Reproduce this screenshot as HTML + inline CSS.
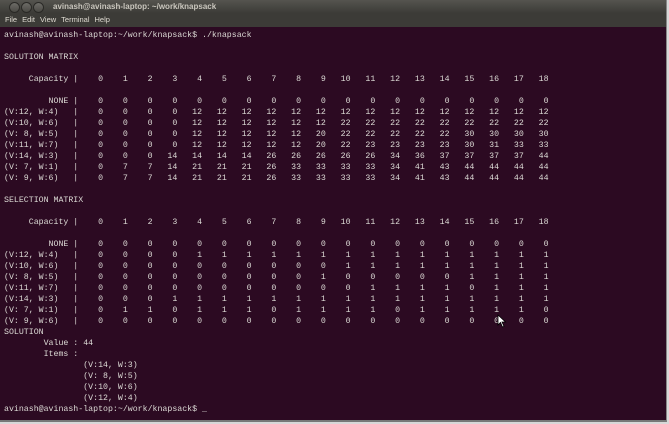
<!DOCTYPE html>
<html><head><style>
html,body{margin:0;padding:0;width:669px;height:424px;overflow:hidden;background:#d8d8d8}
.win{position:absolute;left:0;top:0;width:666px;height:420px;background:#2c0a22;border-right:1px solid #888;border-bottom:2px solid #777}
.title{position:absolute;left:0;top:0;width:666px;height:13px;background:linear-gradient(#55544f,#3c3b37);color:#c9c6bd;font:bold 8px "Liberation Sans",sans-serif;line-height:13px}
.title span{position:absolute;left:53px}
.btn{position:absolute;top:2px;width:9px;height:9px;border-radius:50%;background:linear-gradient(#6d6c67,#4a4944);border:1px solid #2a2926}
.menu{position:absolute;left:0;top:13px;width:666px;height:14px;background:#3c3b37;color:#dfdbd2;font:7.5px "Liberation Sans",sans-serif;line-height:14px}
.menu span{margin-left:5px}
pre{position:absolute;left:4px;top:29.5px;margin:0;font-family:"Liberation Mono",monospace;font-size:8.25px;line-height:11px;color:#dcdad5;white-space:pre}
</style></head><body>
<div class="win">
<div class="title"><div class="btn" style="left:9px"></div><div class="btn" style="left:21px"></div><div class="btn" style="left:33px"></div><span>avinash@avinash-laptop: ~/work/knapsack</span></div>
<div class="menu"><span>File</span><span>Edit</span><span>View</span><span>Terminal</span><span>Help</span></div>
<pre>avinash@avinash-laptop:~/work/knapsack$ ./knapsack

SOLUTION MATRIX

     Capacity |    0    1    2    3    4    5    6    7    8    9   10   11   12   13   14   15   16   17   18

         NONE |    0    0    0    0    0    0    0    0    0    0    0    0    0    0    0    0    0    0    0
(V:12, W:4)   |    0    0    0    0   12   12   12   12   12   12   12   12   12   12   12   12   12   12   12
(V:10, W:6)   |    0    0    0    0   12   12   12   12   12   12   22   22   22   22   22   22   22   22   22
(V: 8, W:5)   |    0    0    0    0   12   12   12   12   12   20   22   22   22   22   22   30   30   30   30
(V:11, W:7)   |    0    0    0    0   12   12   12   12   12   20   22   23   23   23   23   30   31   33   33
(V:14, W:3)   |    0    0    0   14   14   14   14   26   26   26   26   26   34   36   37   37   37   37   44
(V: 7, W:1)   |    0    7    7   14   21   21   21   26   33   33   33   33   34   41   43   44   44   44   44
(V: 9, W:6)   |    0    7    7   14   21   21   21   26   33   33   33   33   34   41   43   44   44   44   44

SELECTION MATRIX

     Capacity |    0    1    2    3    4    5    6    7    8    9   10   11   12   13   14   15   16   17   18

         NONE |    0    0    0    0    0    0    0    0    0    0    0    0    0    0    0    0    0    0    0
(V:12, W:4)   |    0    0    0    0    1    1    1    1    1    1    1    1    1    1    1    1    1    1    1
(V:10, W:6)   |    0    0    0    0    0    0    0    0    0    0    1    1    1    1    1    1    1    1    1
(V: 8, W:5)   |    0    0    0    0    0    0    0    0    0    1    0    0    0    0    0    1    1    1    1
(V:11, W:7)   |    0    0    0    0    0    0    0    0    0    0    0    1    1    1    1    0    1    1    1
(V:14, W:3)   |    0    0    0    1    1    1    1    1    1    1    1    1    1    1    1    1    1    1    1
(V: 7, W:1)   |    0    1    1    0    1    1    1    0    1    1    1    1    0    1    1    1    1    1    0
(V: 9, W:6)   |    0    0    0    0    0    0    0    0    0    0    0    0    0    0    0    0    0    0    0
SOLUTION
        Value : 44
        Items :
                (V:14, W:3)
                (V: 8, W:5)
                (V:10, W:6)
                (V:12, W:4)
avinash@avinash-laptop:~/work/knapsack$ _</pre>
<svg style="position:absolute;left:497px;top:314px" width="10" height="14" viewBox="0 0 10 14"><path d="M1 1 L1 11 L3.5 8.5 L5.5 13 L7 12.3 L5 8 L8.5 8 Z" fill="#fff" stroke="#000" stroke-width="0.8"/></svg>
</div>
</body></html>
